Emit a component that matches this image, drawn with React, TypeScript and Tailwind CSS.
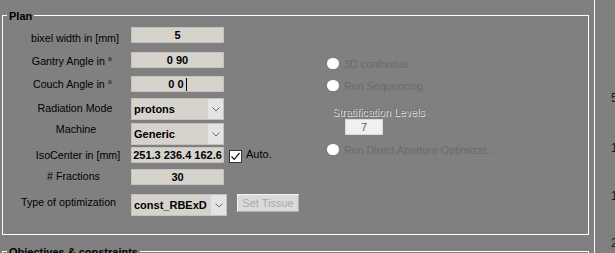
const font = { fontFamily: '"Liberation Sans", Arial, sans-serif' };

function Chevron() {
  return (
    <svg width="8" height="5" viewBox="0 0 8 5" className="block">
      <path d="M0.5 0.5 L4 4 L7.5 0.5" fill="none" stroke="#6b6b6b" strokeWidth="1" />
    </svg>
  );
}

function Edit({ value, cursor }: { value: string; cursor?: boolean }) {
  return (
    <div className="w-[93px] h-[16px] bg-[#d6d3cd] border border-[#c4c2be] flex items-center justify-center text-[11px] font-bold leading-[12px] text-black whitespace-nowrap">
      {value}
      {cursor && <span className="inline-block w-px h-[13px] bg-black ml-[2px]" />}
    </div>
  );
}

function Popup({ value, wide }: { value: string; wide?: boolean }) {
  return (
    <div
      className={
        'h-[22px] bg-[#d6d3cd] border border-[#c4c2be] flex text-[11px] font-bold leading-[12px] text-black ' +
        (wide ? 'w-[96px]' : 'w-[93px]')
      }
    >
      <div className="flex-1 flex items-center pl-[2px] whitespace-nowrap">{value}</div>
      <div className="w-[15px] bg-[#e4e4e4] flex items-center justify-center">
        <Chevron />
      </div>
    </div>
  );
}

function Label({ text, cls }: { text: string; cls: string }) {
  return (
    <div className={'w-[128px] shrink-0 text-center whitespace-nowrap text-[10.7px] leading-[12px] text-black ' + cls}>
      {text}
    </div>
  );
}

function Radio({ text, cls }: { text: string; cls: string }) {
  return (
    <div className={'flex items-center h-[11px] ' + cls}>
      <div className="w-[12px] h-[11px] rounded-full bg-white shrink-0" />
      <span className="ml-[5px] text-[10.7px] leading-[12px] text-[#6a6a6a] whitespace-nowrap">{text}</span>
    </div>
  );
}

export default function App() {
  return (
    <div className="w-[615px] h-[253px] bg-[#808080] flex overflow-hidden" style={font}>
      <div className="w-[594px] shrink-0 pl-[2px] pt-[15px] flex flex-col">
        {/* Plan panel */}
        <div className="relative w-[587px] h-[220px] shrink-0 border border-white flex">
          <div className="absolute top-[-6px] left-[4px] px-[2px] bg-[#808080] text-[11px] font-bold leading-[12px] text-black">
            Plan
          </div>

          {/* form column */}
          <div className="w-[324px] shrink-0 flex flex-col">
            <div className="flex mt-[11px]">
              <Label text="bixel width in [mm]" cls="pl-[16px] pt-[5px]" />
              <Edit value="5" />
            </div>
            <div className="flex mt-[8px]">
              <Label text="Gantry Angle in °" cls="pl-[10px] pt-[3px]" />
              <Edit value="0 90" />
            </div>
            <div className="flex mt-[8px]">
              <Label text="Couch Angle in °" cls="pl-[11px] pt-[2px]" />
              <Edit value="0 0" cursor />
            </div>
            <div className="flex mt-[6px]">
              <Label text="Radiation Mode" cls="pl-[16px] pt-[4px]" />
              <Popup value="protons" />
            </div>
            <div className="flex mt-[3px]">
              <Label text="Machine" cls="pl-[18px] pt-[0px]" />
              <Popup value="Generic" />
            </div>
            <div className="flex mt-[2px]">
              <Label text="IsoCenter in [mm]" cls="pl-[22px] pt-[2px]" />
              <Edit value="251.3 236.4 162.6" />
              <div className="ml-[5px] mt-[3px] w-[13px] h-[13px] bg-white border border-[#333] flex items-center justify-center">
                <svg width="11" height="11" viewBox="0 0 11 11">
                  <path d="M1.5 5.5 L4.2 8.3 L9.5 2" fill="none" stroke="#111" strokeWidth="1.2" />
                </svg>
              </div>
              <span className="ml-[4px] pt-[1px] text-[11px] leading-[12px] text-black">Auto.</span>
            </div>
            <div className="flex mt-[6px]">
              <Label text="# Fractions" cls="pl-[13px] pt-[1px]" />
              <Edit value="30" />
            </div>
            <div className="flex mt-[9px]">
              <Label text="Type of optimization" cls="pl-[3px] pt-[2px]" />
              <Popup value="const_RBExD" wide />
              <div className="ml-[10px] w-[62px] h-[18px] bg-[#dadada] border border-[#f2f2f2] border-r-[#b0b0b0] border-b-[#b0b0b0] flex items-center justify-center text-[11px] leading-[12px] text-[#a9a9a9]">
                Set Tissue
              </div>
            </div>
          </div>

          {/* options column */}
          <div className="flex flex-col">
            <Radio text="3D conformal" cls="mt-[42px]" />
            <Radio text="Run Sequencing" cls="mt-[11px]" />
            <div className="mt-[15px] pl-[5px] text-[10.7px] leading-[12px] text-[#727272] whitespace-nowrap [text-shadow:1px_1px_0_#e6e6e6]">
              Stratification Levels
            </div>
            <div className="mt-[1px] ml-[18px] w-[38px] h-[16px] bg-[#f0f0f0] border border-[#d8d8d8] flex items-center justify-center text-[11px] leading-[12px] text-[#4d5a70]">
              7
            </div>
            <Radio text="Run Direct Aperture Optimizat..." cls="mt-[9px]" />
          </div>
        </div>

        {/* Objectives panel */}
        <div className="relative w-[587px] h-[60px] shrink-0 mt-[16px] border border-white">
          <div className="absolute top-[-6px] left-[4px] px-[2px] bg-[#808080] text-[11px] font-bold leading-[12px] text-black whitespace-nowrap">
            Objectives &amp; constraints
          </div>
        </div>
      </div>

      <div className="w-px h-full bg-white shrink-0" />

      <div className="flex-1 pl-[16px] flex flex-col text-[12px] leading-[14px] text-[#1a1a1a]">
        <div className="mt-[91px]">5</div>
        <div className="mt-[36px]">1</div>
        <div className="mt-[34px]">1</div>
        <div className="mt-[33px]">2</div>
      </div>
    </div>
  );
}
